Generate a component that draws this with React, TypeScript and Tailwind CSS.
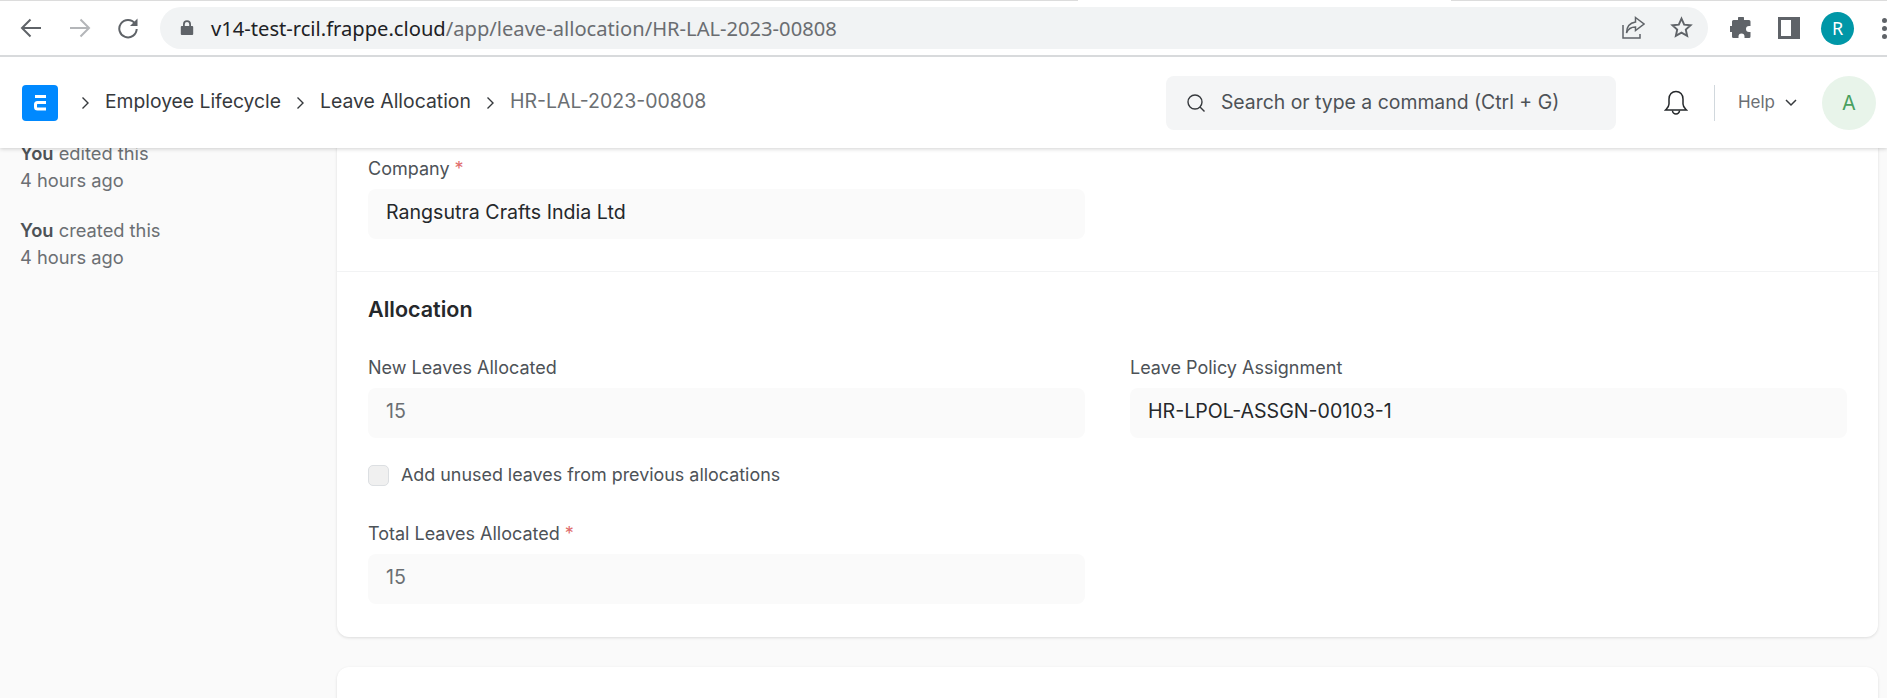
import React from "react";

const Chev = ({ cls = "" }: { cls?: string }) => (
  <svg width="9" height="14" viewBox="0 0 9 14" fill="none" stroke="#36393d" strokeWidth="1.4" className={cls}>
    <path d="M1.5 1.5 7 7l-5.5 5.5" />
  </svg>
);

const Field = ({ label, value, req, dim }: { label: string; value: string; req?: boolean; dim?: boolean }) => (
  <div className="flex flex-col">
    <div className="h-6 leading-6 text-[18px] text-[#4d5257]">
      {label}
      {req && <span className="text-[#e06c6c]"> *</span>}
    </div>
    <div className={`mt-2 h-[50px] rounded-lg bg-[#fafafa] pl-[18px] pb-[2px] flex items-center text-[19.6px] ${dim ? "text-[#6b6f73]" : "text-[#25282b]"}`}>
      {value}
    </div>
  </div>
);

export default function App() {
  return (
    <div className="w-[1887px] h-[698px] overflow-hidden bg-[#fafafa] flex flex-col font-['Inter',sans-serif]">
      <div className="relative z-20 h-[57px] shrink-0 bg-white border-b-2 border-[#d8dadc] flex flex-col">
        <div className="flex h-px shrink-0">
          <div className="w-[1078px] bg-[#dcdcdc]" />
          <div className="w-[373px]" />
          <div className="flex-1 bg-[#dcdcdc]" />
        </div>
        <div className="flex items-center h-[54px]">
          <div className="w-[160px] flex items-center pl-[20px] gap-[27px] shrink-0">
            <svg width="22" height="20" viewBox="0 0 22 20" fill="none" stroke="#5f6368" strokeWidth="2">
              <path d="M21 10H2M10.5 1.5 2 10l8.500 8.500" />
            </svg>
            <svg width="22" height="20" viewBox="0 0 22 20" fill="none" stroke="#b4b6b9" strokeWidth="2">
              <path d="M1 10h19M11.500 1.500 20 10l-8.500 8.500" />
            </svg>
            <svg width="22" height="22" viewBox="0 0 22 22" fill="none" className="ml-[-1px]">
              <path d="M18 6.500A8.700 8.700 0 1 0 19.700 12" stroke="#5f6368" strokeWidth="2" />
              <path d="M20.500 1.500v7.500H13z" fill="#5f6368" />
            </svg>
          </div>
          <div className="w-[1548px] h-[42px] shrink-0 rounded-full bg-[#f1f3f4] flex items-center pl-[20px] mt-[-1px]">
            <svg width="14" height="15" viewBox="0 0 14 15" fill="#5f6368" className="shrink-0">
              <path d="M3 6V4.200a4 4 0 0 1 8 0V6h1.200a1 1 0 0 1 1 1v7a1 1 0 0 1-1 1H1.800a1 1 0 0 1-1-1V7a1 1 0 0 1 1-1zm1.800 0h4.400V4.200a2.200 2.200 0 0 0-4.400 0z" />
            </svg>
            <div className="ml-[17px] mt-[1px] text-[20.15px] font-['Noto_Sans',sans-serif] text-[#6a6d71] whitespace-nowrap">
              <span className="text-[#202124]">v14-test-rcil.frappe.cloud</span>/app/leave-allocation/HR-LAL-2023-00808
            </div>
            <div className="ml-auto flex items-center gap-[25px] pr-[15px]">
              <svg width="23" height="23" viewBox="0 0 23 23" fill="none" stroke="#5f6368" strokeWidth="1.500">
                <path d="M1 9v13h17v-4" />
                <path d="M13.500 1.500 22 8l-8.500 6.500V11C9 11 6 13 4.500 17c0-6 3-10 9-11z" />
              </svg>
              <svg width="23" height="23" viewBox="0 0 24 24" fill="none" stroke="#5f6368" strokeWidth="2">
                <path d="m12 2.800 2.800 6.200 6.700.7-5 4.500 1.400 6.600L12 17.400l-5.900 3.400 1.400-6.600-5-4.500 6.700-.7z" />
              </svg>
            </div>
          </div>
          <div className="flex items-center flex-1 pl-[22px] gap-[26px]">
            <svg width="22" height="22" viewBox="0 0 22 22" fill="#5f6368" className="shrink-0">
              <path d="M8 1.500a3 3 0 0 1 6 0V3h5a1.500 1.500 0 0 1 1.500 1.500V9h-1.500a3 3 0 0 0 0 6h1.500v4.500A1.500 1.500 0 0 1 19 21h-4.500v-1.500a3 3 0 0 0-6 0V21H3.500A1.500 1.500 0 0 1 2 19.500V15H.8a3 3 0 0 1 0-6H2V4.500A1.500 1.500 0 0 1 3.500 3H8z" />
            </svg>
            <svg width="22" height="22" viewBox="0 0 22 22" fill="none" className="shrink-0">
              <rect x="1.500" y="1.500" width="19" height="19" stroke="#5f6368" strokeWidth="3" />
              <rect x="13" y="2" width="8" height="18" fill="#5f6368" />
            </svg>
            <div className="w-[33px] h-[33px] ml-[-5px] rounded-full bg-[#0097a7] text-white text-[18px] flex items-center justify-center shrink-0 font-['Noto_Sans',sans-serif]">R</div>
            <div className="flex flex-col gap-[3px] ml-[2px] shrink-0">
              <div className="w-[5px] h-[5px] rounded-full bg-[#5f6368]" />
              <div className="w-[5px] h-[5px] rounded-full bg-[#5f6368]" />
              <div className="w-[5px] h-[5px] rounded-full bg-[#5f6368]" />
            </div>
          </div>
        </div>
      </div>

      <div className="relative z-10 h-[91px] shrink-0 bg-white shadow-[0_1px_4px_rgba(0,0,0,0.18)] flex items-center pl-[22px]">
        <div className="w-9 h-9 rounded-[4px] bg-[#0089ff] flex items-center justify-center shrink-0">
          <svg width="13" height="18" viewBox="0 0 13 18" fill="none" stroke="#fff" strokeWidth="3">
            <path d="M1 2.500h11" />
            <path d="M12 8.500H3.500a2 2 0 0 0-2 2V13a2 2 0 0 0 2 2H12" />
          </svg>
        </div>
        <Chev cls="ml-[23px]" />
        <span className="ml-[15px] mb-[2px] text-[19.3px] text-[#36393d]">Employee Lifecycle</span>
        <Chev cls="ml-[15px]" />
        <span className="ml-[15px] mb-[2px] text-[19.4px] text-[#36393d]">Leave Allocation</span>
        <Chev cls="ml-[15px]" />
        <span className="ml-[15px] mb-[2px] text-[19.5px] text-[#6b6f73]">HR-LAL-2023-00808</span>

        <div className="ml-auto w-[450px] h-[54px] rounded-lg bg-[#f4f5f6] flex items-center pl-[20px] shrink-0">
          <svg width="20" height="20" viewBox="0 0 20 20" fill="none" stroke="#36393d" strokeWidth="1.400">
            <circle cx="9" cy="9" r="7" />
            <path d="m14 14 4.500 4.500" />
          </svg>
          <span className="ml-[15px] text-[19.4px] text-[#4d5257]">Search or type a command (Ctrl + G)</span>
        </div>
        <svg width="24" height="26" viewBox="0 0 24 26" fill="none" stroke="#25282b" strokeWidth="1.500" className="ml-[48px] shrink-0">
          <path d="M12 1.500c-4 0-7 3-7 7.500v5c0 3-2 4.500-3.500 6h21c-1.500-1.500-3.500-3-3.500-6V9c0-4.500-3-7.500-7-7.500z" />
          <path d="M8.500 20.500a3.500 3.500 0 0 0 7 0" />
        </svg>
        <div className="ml-[26px] w-px h-9 bg-[#d1d8dd] shrink-0" />
        <span className="ml-[23px] text-[17px] text-[#6b6f73]">Help</span>
        <svg width="12" height="8" viewBox="0 0 12 8" fill="none" stroke="#36393d" strokeWidth="1.500" className="ml-[10px] shrink-0">
          <path d="m1 1 5 5 5-5" />
        </svg>
        <div className="ml-[25px] mr-[11px] w-[54px] h-[54px] rounded-full bg-[#e8f4ea] text-[#48a05f] text-[20px] flex items-center justify-center shrink-0">A</div>
      </div>

      <div className="flex flex-1 overflow-hidden">
        <div className="w-[337px] shrink-0 pl-5 -mt-2 text-[18.3px] leading-[27px] text-[#6b6f73]">
          <div><b className="font-semibold text-[#4d5257]">You</b> edited this</div>
          <div>4 hours ago</div>
          <div className="mt-[23px]"><b className="font-semibold text-[#4d5257]">You</b> created this</div>
          <div>4 hours ago</div>
        </div>
        <div className="w-[1541px] shrink-0 -mt-7 flex flex-col">
          <div className="rounded-xl bg-white shadow-[0_1px_3px_rgba(0,0,0,0.12)] shrink-0">
            <div className="pt-[37px] px-[31px] pb-8 border-b border-[#f2f3f4]">
              <div className="w-[717px]">
                <Field label="Company" value="Rangsutra Crafts India Ltd" req />
              </div>
            </div>
            <div className="px-[31px] pt-[23px] pb-[33px]">
              <div className="h-7 leading-7 text-[21.5px] font-semibold text-[#25282b]">Allocation</div>
              <div className="mt-[33px] grid grid-cols-2 gap-x-[45px]">
                <Field label="New Leaves Allocated" value="15" dim />
                <Field label="Leave Policy Assignment" value="HR-LPOL-ASSGN-00103-1" />
              </div>
              <div className="mt-[27px] h-[21px] flex items-center">
                <div className="w-[21px] h-[21px] rounded-[5px] bg-[#f0f0f0] border border-[#dcdfe2] shrink-0" />
                <span className="ml-[12px] text-[17.9px] text-[#4d5257]">Add unused leaves from previous allocations</span>
              </div>
              <div className="mt-[36px] w-[717px]">
                <Field label="Total Leaves Allocated" value="15" req dim />
              </div>
            </div>
          </div>
          <div className="mt-[30px] h-[60px] rounded-t-xl bg-white shadow-[0_1px_3px_rgba(0,0,0,0.12)] shrink-0" />
        </div>
      </div>
    </div>
  );
}
